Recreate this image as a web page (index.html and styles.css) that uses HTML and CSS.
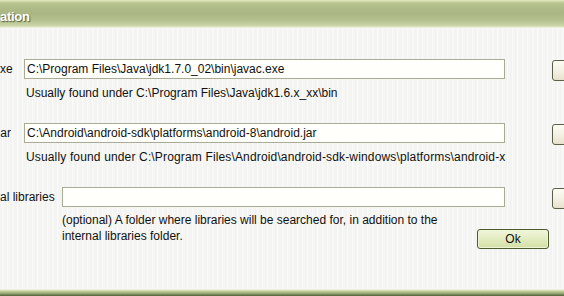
FILE: index.html
```html
<!DOCTYPE html>
<html>
<head>
<meta charset="utf-8">
<link rel="stylesheet" href="styles.css">
</head>
<body>
<div class="window">
  <div class="titlebar"><span class="title">ation</span></div>
  <div class="content">
    <div class="row">
      <div class="line">
        <span class="label label-short">xe</span>
        <div class="input">C:\Program Files\Java\jdk1.7.0_02\bin\javac.exe</div>
        <div class="browse"></div>
      </div>
      <div class="hint hint-short">Usually found under C:\Program Files\Java\jdk1.6.x_xx\bin</div>
    </div>
    <div class="row">
      <div class="line">
        <span class="label label-short">ar</span>
        <div class="input">C:\Android\android-sdk\platforms\android-8\android.jar</div>
        <div class="browse"></div>
      </div>
      <div class="hint hint-short hint-wide">Usually found under C:\Program Files\Android\android-sdk-windows\platforms\android-x</div>
    </div>
    <div class="row">
      <div class="line">
        <span class="label label-long">al libraries</span>
        <div class="input"></div>
        <div class="browse"></div>
      </div>
      <div class="hint-line">
        <div class="hint hint-wrap">(optional) A folder where libraries will be searched for, in addition to the internal libraries folder.</div>
        <div class="ok">Ok</div>
      </div>
    </div>
  </div>
  <div class="footer"></div>
</div>
</body>
</html>
```
FILE: styles.css
```css
html, body {
  margin: 0;
  padding: 0;
}
body {
  width: 564px;
  height: 296px;
  overflow: hidden;
  font-family: "Liberation Sans", Arial, sans-serif;
  font-size: 12px;
  color: #111;
}
.window {
  width: 564px;
  height: 296px;
  display: flex;
  flex-direction: column;
  overflow: hidden;
}
.titlebar {
  height: 29px;
  flex: none;
  background: linear-gradient(to bottom,
    #e6ecc6 0px, #d3dcae 1px, #bac691 3px, #adb986 9px, #aab683 14px,
    #b4c08e 20px, #c3cd9e 24px, #cdd6a9 26px, #e3e9cb 27px, #f2f4ea 28px, #fafbf7 29px);
  display: flex;
  align-items: center;
  overflow: hidden;
}
.title {
  font-weight: bold;
  font-size: 13px;
  color: #fff;
  text-shadow: 1px 1px 1px #55603a;
  margin-top: 3px;
  letter-spacing: -0.3px;
}
.content {
  flex: 1;
  padding-top: 30px;
  background-color: #f6f7f4;
  background-image: repeating-linear-gradient(to right,
    #f3f4f1 0px, #f3f4f1 2px, #fafaf8 2px, #fafaf8 3px, #f5f6f3 3px, #f5f6f3 5px);
  display: flex;
  flex-direction: column;
  gap: 22px;
}
.row {
  width: 627px;
  display: flex;
  flex-direction: column;
}
.line {
  display: flex;
  align-items: flex-start;
  height: 20px;
}
.label {
  flex: none;
  height: 20px;
  line-height: 20px;
  text-align: right;
  white-space: nowrap;
  overflow: hidden;
  box-sizing: border-box;
}
.label-short {
  width: 24px;
  padding-right: 13px;
}
.label-long {
  width: 62px;
  padding-right: 10px;
}
.input {
  flex: 1;
  height: 20px;
  box-sizing: border-box;
  border: 1px solid #a9ab94;
  background: #fffffb;
  line-height: 18px;
  padding-left: 2px;
  white-space: nowrap;
  overflow: hidden;
}
.browse {
  flex: none;
  width: 75px;
  height: 21px;
  margin-left: 47px;
  margin-top: 1px;
  box-sizing: border-box;
  border: 1px solid #5d5f4c;
  border-radius: 3px;
  background: linear-gradient(to bottom, #fdfcf4, #f2efe0 60%, #e6e1cb);
}
.hint {
  line-height: 16px;
  margin-top: 6px;
  white-space: nowrap;
}
.hint-short {
  padding-left: 26px;
}
.hint-wide {
  letter-spacing: 0.15px;
}
.hint-line {
  display: flex;
  align-items: flex-start;
  padding-left: 62px;
  padding-right: 78px;
}
.hint-wrap {
  white-space: normal;
  width: 396px;
  flex: none;
  margin-top: 5px;
}
.ok {
  margin-left: auto;
  margin-top: 22px;
  width: 72px;
  height: 20px;
  box-sizing: border-box;
  border: 1px solid #4c5c2e;
  border-radius: 3px;
  background: linear-gradient(to bottom, #f1f6dc, #e3ebc0 50%, #d3dea4);
  box-shadow: inset 0 0 0 1px #eef3d6;
  text-align: center;
  line-height: 18px;
  font-size: 12px;
  color: #111;
}
.footer {
  height: 7px;
  flex: none;
  background: linear-gradient(to bottom,
    #f4f6ee 0px, #e2e9c9 1px, #c9d4a6 2px, #b1bf8c 3px, #a2b27c 4px, #8a9b66 5px, #66774a 6px, #55653c 7px);
}
```
